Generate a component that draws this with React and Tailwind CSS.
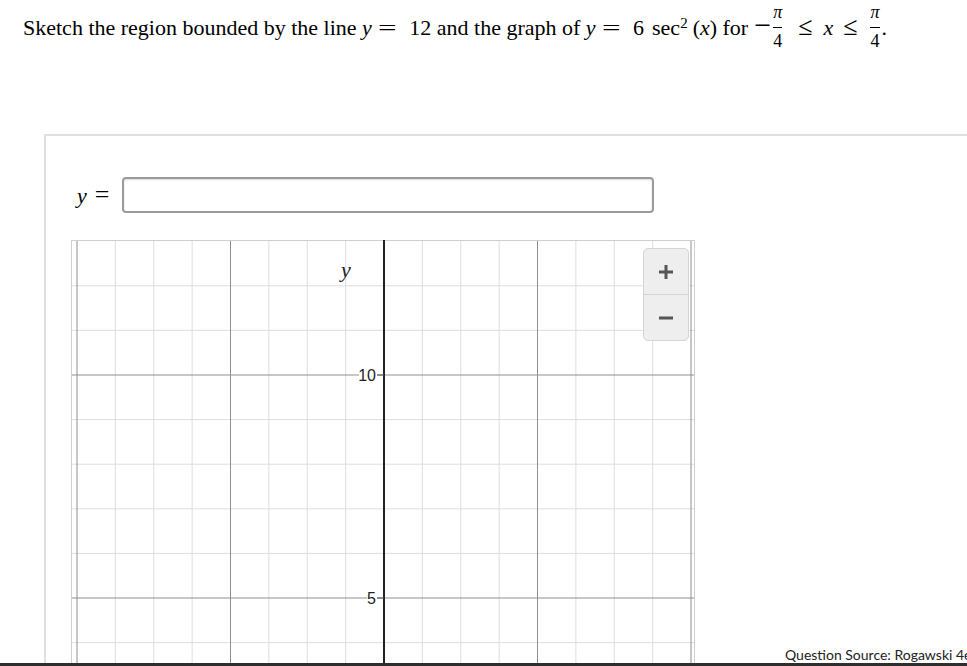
import React from 'react';

const serif = { fontFamily: '"Liberation Serif", "Times New Roman", serif' };

function Frac() {
  return (
    <span className="inline-block align-[-12px] px-[2px] text-center">
      <span className="block italic text-[18px] leading-[17px] mt-[3px]">π</span>
      <span className="block h-px bg-black mt-[6px] mb-[5px]" />
      <span className="block text-[18px] leading-[17px]">4</span>
    </span>
  );
}

function Grid() {
  const W = 624;
  const H = 426;
  const minorX = 38.375;
  const unitY = 44.6;
  const xs = [];
  for (let k = 0; k <= 16; k++) xs.push({ x: 6 + k * minorX, major: k % 4 === 0, axis: k === 8 });
  const ys = [];
  for (let v = 12; v >= 4; v--) ys.push({ y: 135 + (10 - v) * unitY, major: v % 5 === 0, v });

  return (
    <svg width={W} height={H} className="block">
      {xs.filter(l => !l.major).map((l, i) => (
        <line key={'vx' + i} x1={l.x} x2={l.x} y1={0} y2={H} stroke="#dedede" strokeWidth="1" />
      ))}
      {ys.filter(l => !l.major).map((l, i) => (
        <line key={'hy' + i} x1={0} x2={W} y1={l.y} y2={l.y} stroke="#dedede" strokeWidth="1" />
      ))}
      {xs.filter(l => l.major && !l.axis).map((l, i) => (
        <line key={'mx' + i} x1={l.x} x2={l.x} y1={0} y2={H} stroke="#8f8f8f" strokeWidth="1" />
      ))}
      {ys.filter(l => l.major).map((l, i) => (
        <line key={'my' + i} x1={0} x2={W} y1={l.y} y2={l.y} stroke="#8f8f8f" strokeWidth="1" />
      ))}
      <rect x="0.5" y="0.5" width={W - 1} height={H + 10} fill="none" stroke="#cfcfcf" strokeWidth="1" />
      <line x1={313} x2={313} y1={0} y2={H} stroke="#222" strokeWidth="2" />

      {[{ t: '10', y: 135 }, { t: '5', y: 358 }].map(l => (
        <g key={l.t}>
          <rect x={l.t === '10' ? 288 : 296} y={l.y - 9} width={l.t === '10' ? 18 : 10} height={18} fill="#fff" />
          <line x1={306} x2={313} y1={l.y} y2={l.y} stroke="#555" strokeWidth="1" />
          <text x={305} y={l.y + 6} textAnchor="end" fontSize="16" fill="#222" style={{ fontFamily: '"Liberation Sans", Arial, sans-serif' }}>{l.t}</text>
        </g>
      ))}
      <text x={270} y={37} fontSize="22" fontStyle="italic" fill="#222" style={serif}>y</text>
    </svg>
  );
}

export default function App() {
  return (
    <div className="relative w-[967px] h-[666px] overflow-hidden bg-white text-black">
      <div className="h-[134px] pl-[23px] pt-px" style={serif}>
        <p className="text-[22px] leading-[44px] whitespace-nowrap">
          Sketch the region bounded by the line <i>y</i>
          <span className="inline-block scale-x-150 ml-[9px] mr-[16px]">=</span>12 and the graph of <i>y</i>
          <span className="inline-block scale-x-150 ml-[9px] mr-[16px]">=</span>6<span className="ml-[8px]">sec</span>
          <sup className="text-[15px]">2</sup>
          <span className="ml-[5px]">(<i>x</i>)</span> for<span className="text-[30px] leading-none ml-[6px]">−</span><Frac />
          <span className="text-[26px] leading-none ml-[14px] mr-[11px]">≤</span><i>x</i>
          <span className="text-[26px] leading-none ml-[10px] mr-[11px]">≤</span><Frac />.
        </p>
      </div>

      <div className="ml-[44px] border-t-2 border-l-2 border-[#e0e0e0] h-[600px]">
        <div className="pl-[31px] pt-[41px] flex items-center" style={serif}>
          <span className="w-[45px] shrink-0 text-[22px] leading-none whitespace-nowrap">
            <i>y</i><span className="ml-[8px] text-[26px]">=</span>
          </span>
          <div className="w-[532px] h-[36px] rounded-[4px] border-2 border-[#9a9a9a] bg-white shadow-[inset_0_1px_2px_rgba(0,0,0,0.15)]" />
        </div>

        <div className="relative ml-[25px] mt-[27px] w-[624px]">
          <Grid />
          <div className="absolute left-[572px] top-[8px] w-[46px] h-[93px] rounded-[5px] border border-[#d4d4d4] bg-[#eeeeee] flex flex-col">
            <div className="flex-1 flex items-center justify-center border-b border-[#d4d4d4]">
              <svg width="16" height="16" viewBox="0 0 16 16">
                <line x1="1" y1="8" x2="15" y2="8" stroke="#555" strokeWidth="3" />
                <line x1="8" y1="1" x2="8" y2="15" stroke="#555" strokeWidth="3" />
              </svg>
            </div>
            <div className="flex-1 flex items-center justify-center">
              <svg width="16" height="16" viewBox="0 0 16 16">
                <line x1="1" y1="8" x2="15" y2="8" stroke="#555" strokeWidth="3" />
              </svg>
            </div>
          </div>
        </div>
      </div>

      <div className="absolute left-[785px] bottom-[2px] whitespace-nowrap text-[14px] leading-[18px] text-[#222]" style={{ fontFamily: '"Source Sans Pro", Lato, sans-serif' }}>
        Question Source: Rogawski 4e
      </div>
      <div className="absolute left-0 right-0 bottom-0 h-[3px] bg-[#2e2e2e]" />
    </div>
  );
}
